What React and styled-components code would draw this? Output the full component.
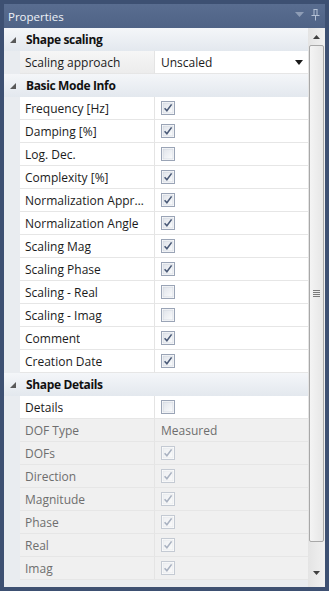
import React from "react";
import styled, { createGlobalStyle } from "styled-components";

const GlobalStyle = createGlobalStyle`
  html, body {
    margin: 0;
    padding: 0;
    background: #3d5072;
  }
  body {
    font-family: "Open Sans", "Noto Sans", sans-serif;
  }
`;

const sections = [
  {
    title: "Shape scaling",
    rows: [{ label: "Scaling approach", type: "select", value: "Unscaled" }],
  },
  {
    title: "Basic Mode Info",
    rows: [
      { label: "Frequency [Hz]", checked: true },
      { label: "Damping [%]", checked: true },
      { label: "Log. Dec.", checked: false },
      { label: "Complexity [%]", checked: true },
      { label: "Normalization Approach", checked: true },
      { label: "Normalization Angle", checked: true },
      { label: "Scaling Mag", checked: true },
      { label: "Scaling Phase", checked: true },
      { label: "Scaling - Real", checked: false },
      { label: "Scaling - Imag", checked: false },
      { label: "Comment", checked: true },
      { label: "Creation Date", checked: true },
    ],
  },
  {
    title: "Shape Details",
    rows: [
      { label: "Details", checked: false },
      { label: "DOF Type", type: "text", value: "Measured", disabled: true },
      { label: "DOFs", checked: true, disabled: true },
      { label: "Direction", checked: true, disabled: true },
      { label: "Magnitude", checked: true, disabled: true },
      { label: "Phase", checked: true, disabled: true },
      { label: "Real", checked: true, disabled: true },
      { label: "Imag", checked: true, disabled: true },
    ],
  },
];

const CheckBox = ({ checked, disabled }) => (
  <svg width="14" height="14" viewBox="0 0 14 14">
    <defs>
      <linearGradient id={disabled ? "cbd" : "cbn"} x1="0" y1="0" x2="1" y2="1">
        <stop offset="0" stopColor={disabled ? "#eef0f3" : "#dfe3ea"} />
        <stop offset="1" stopColor={disabled ? "#fafafa" : "#fbfcfd"} />
      </linearGradient>
    </defs>
    <rect
      x="0.5"
      y="0.5"
      width="13"
      height="13"
      fill="#fff"
      stroke={disabled ? "#c4cad3" : "#9aa4b6"}
    />
    <rect
      x="2"
      y="2"
      width="10"
      height="10"
      fill={`url(#${disabled ? "cbd" : "cbn"})`}
      stroke={disabled ? "#e0e3e8" : "#c9d0db"}
      strokeWidth="0.6"
    />
    {checked && (
      <path
        d="M3.6 7.2 L5.9 9.8 L10.6 3.4"
        fill="none"
        stroke={disabled ? "#a9b2c1" : "#4b5b78"}
        strokeWidth="1.6"
      />
    )}
  </svg>
);

const App = () => {
  return (
    <>
      <GlobalStyle />
      <Frame>
        <TitleBar>
          <TitleText>Properties</TitleText>
          <TitleIcons>
            <svg width="9" height="6" viewBox="0 0 9 6">
              <path d="M0 0 H9 L4.5 5 Z" fill="#8e9db6" />
            </svg>
            <svg width="9" height="12" viewBox="0 0 9 12">
              <path
                d="M2.5 0.5 H6.5 M3 0.5 V6.5 M6 0.5 V6.5 M0.5 6.5 H8.5 M4.5 6.5 V11.5"
                stroke="#b4c1d5"
                strokeWidth="1"
                fill="none"
              />
            </svg>
          </TitleIcons>
        </TitleBar>
        <Body>
          <Grid>
            {sections.map((section) => (
              <React.Fragment key={section.title}>
                <Header>
                  <Toggle>
                    <svg width="6" height="6" viewBox="0 0 6 6">
                      <path d="M6 0 V6 H0 Z" fill="#595959" />
                    </svg>
                  </Toggle>
                  <HeaderText>{section.title}</HeaderText>
                </Header>
                {section.rows.map((row) => (
                  <Row key={section.title + row.label}>
                    <Gutter />
                    <Label $disabled={row.disabled} $select={row.type === "select"}>
                      <span>{row.label}</span>
                    </Label>
                    <Value $disabled={row.disabled}>
                      {row.type === "select" ? (
                        <SelectValue>
                          <span>{row.value}</span>
                          <svg width="8" height="5" viewBox="0 0 8 5">
                            <path d="M0 0 H8 L4 5 Z" fill="#1a1a1a" />
                          </svg>
                        </SelectValue>
                      ) : row.type === "text" ? (
                        <TextValue $disabled={row.disabled}>{row.value}</TextValue>
                      ) : (
                        <CheckBox checked={row.checked} disabled={row.disabled} />
                      )}
                    </Value>
                  </Row>
                ))}
              </React.Fragment>
            ))}
            <Filler />
          </Grid>
          <ScrollBar>
            <Arrow>
              <svg width="7" height="4" viewBox="0 0 7 4">
                <path d="M0 4 H7 L3.5 0 Z" fill="#404040" />
              </svg>
            </Arrow>
            <Track>
              <Thumb>
                <Grip>
                  <i />
                  <i />
                  <i />
                  <i />
                </Grip>
              </Thumb>
            </Track>
            <Arrow>
              <svg width="7" height="4" viewBox="0 0 7 4">
                <path d="M0 0 H7 L3.5 4 Z" fill="#404040" />
              </svg>
            </Arrow>
          </ScrollBar>
        </Body>
      </Frame>
    </>
  );
};

export default App;

const Frame = styled.div`
  width: 329px;
  height: 591px;
  box-sizing: border-box;
  padding: 4px;
  background: #3d5072;
  display: flex;
  flex-direction: column;
`;

const TitleBar = styled.div`
  height: 24px;
  flex-shrink: 0;
  display: flex;
  align-items: center;
  justify-content: space-between;
  padding: 0 5px 0 4px;
  background: linear-gradient(#596d90, #4f6386);
`;

const TitleText = styled.div`
  color: #eef2f8;
  font-size: 11.5px;
`;

const TitleIcons = styled.div`
  display: flex;
  align-items: center;
  gap: 7px;
  padding-bottom: 2px;
`;

const Body = styled.div`
  flex: 1;
  display: flex;
  background: #fff;
  min-height: 0;
`;

const Grid = styled.div`
  flex: 1;
  display: flex;
  flex-direction: column;
  background: #e9ecf0;
`;

const Header = styled.div`
  height: 23px;
  flex-shrink: 0;
  display: flex;
  align-items: center;
  background: linear-gradient(#f4f6f9, #e3e8ee);
`;

const Toggle = styled.div`
  width: 16px;
  display: flex;
  justify-content: center;
  padding-left: 1px;
`;

const HeaderText = styled.div`
  padding-left: 5px;
  font-weight: 700;
  font-size: 12px;
  letter-spacing: -0.35px;
  color: #111;
`;

const Row = styled.div`
  height: 23px;
  flex-shrink: 0;
  display: flex;
`;

const Gutter = styled.div`
  width: 16px;
  flex-shrink: 0;
  background: #e9ecf0;
`;

const Label = styled.div`
  width: 135px;
  flex-shrink: 0;
  box-sizing: border-box;
  display: flex;
  align-items: center;
  padding: 0 3px 0 5px;
  border-bottom: 1px solid #e6e6e6;
  border-right: 1px solid #e4e4e4;
  background: ${(p) =>
    p.$select
      ? "linear-gradient(#f6f6f6, #ececec)"
      : p.$disabled
      ? "#f0f0f0"
      : "#fff"};
  color: ${(p) => (p.$disabled ? "#6e6e6e" : "#1b1b1b")};
  font-size: 12px;

  span {
    white-space: nowrap;
    overflow: hidden;
    text-overflow: ellipsis;
  }
`;

const Value = styled.div`
  flex: 1;
  box-sizing: border-box;
  display: flex;
  align-items: center;
  padding-left: 6px;
  border-bottom: 1px solid #e6e6e6;
  background: ${(p) => (p.$disabled ? "#f0f0f0" : "#fff")};
`;

const SelectValue = styled.div`
  flex: 1;
  display: flex;
  align-items: center;
  justify-content: space-between;
  padding-right: 5px;
  font-size: 12px;
  color: #1b1b1b;
`;

const TextValue = styled.div`
  font-size: 12px;
  color: ${(p) => (p.$disabled ? "#6e6e6e" : "#1b1b1b")};
`;

const Filler = styled.div`
  flex: 1;
`;

const ScrollBar = styled.div`
  width: 17px;
  flex-shrink: 0;
  display: flex;
  flex-direction: column;
  padding-bottom: 6px;
  background: linear-gradient(90deg, #e4e4e4, #f0f0f0);
`;

const Arrow = styled.div`
  height: 17px;
  display: flex;
  align-items: center;
  justify-content: center;
`;

const Track = styled.div`
  flex: 1;
  display: flex;
  align-items: flex-start;
  padding: 0 1px;
`;

const Thumb = styled.div`
  flex: 1;
  height: 497px;
  box-sizing: border-box;
  border: 1px solid #a8a8a8;
  border-radius: 2px;
  background: linear-gradient(90deg, #f4f4f4, #e6e6e6);
  display: flex;
  align-items: center;
  justify-content: center;
`;

const Grip = styled.div`
  display: flex;
  flex-direction: column;
  gap: 1px;

  i {
    display: block;
    width: 7px;
    height: 1px;
    background: #7a7a7a;
  }
`;
